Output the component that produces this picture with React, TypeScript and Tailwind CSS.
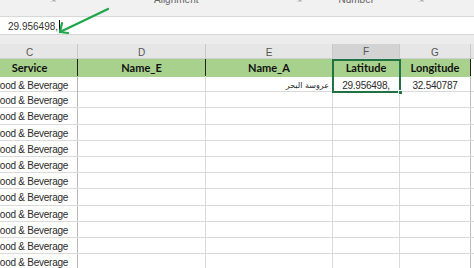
import React from "react";

const cols = "grid grid-cols-[96px_128px_127px_67px_71px_40px]";
const arial = { fontFamily: '"Liberation Sans", Arial, sans-serif' };
const calibri = { fontFamily: 'Lato, "Open Sans", sans-serif' };

export default function App() {
  const rows = Array.from({ length: 12 });
  return (
    <div className="relative w-[474px] h-[268px] overflow-hidden bg-white" style={arial}>
      {/* ribbon */}
      <div className="h-[17px] bg-[#f1f1f1] overflow-hidden relative">
        <div className="flex items-start text-[10px] text-[#666] -mt-[6px] h-[12px] leading-[12px]">
          <span className="ml-[50px] text-[7px] text-[#999]">⇲</span>
          <span className="ml-[98px]">Alignment</span>
          <span className="ml-[98px] text-[7px] text-[#999]">⇲</span>
          <span className="ml-[36px]">Number</span>
          <span className="ml-[44px] text-[7px] text-[#999]">⇲</span>
        </div>
        <div className="absolute left-0 right-0 bottom-0 h-px bg-[#d8d8d8]" />
      </div>
      {/* formula bar */}
      <div className="h-[18px] bg-white border-b border-[#d6d6d6] flex items-center pl-[8px] pt-[2px]">
        <span className="text-[10px] text-[#333]">29.956498,</span>
        <span className="w-px h-[13px] bg-black ml-[1px]" />
      </div>
      {/* band */}
      <div className="h-[9px] bg-[#ececec]" />
      {/* column headers */}
      <div className={`${cols} -ml-[18px] h-[15px] bg-[#e6e6e6] text-[10px] text-[#555] border-b border-[#cfcfcf]`}>
        {["C", "D", "E", "F", "G", ""].map((c, i) => (
          <div
            key={i}
            className={`flex items-center justify-center border-r border-[#c8c8c8] ${
              c === "F" ? "bg-[#d3d3d3] border-b-2 border-b-[#217346]" : ""
            }`}
          >
            {c}
          </div>
        ))}
      </div>
      {/* header row */}
      <div
        className={`${cols} -ml-[18px] h-[17px] text-[11px] font-bold text-[#111] border-b-[1.5px] border-[#222]`}
        style={calibri}
      >
        {["Service", "Name_E", "Name_A", "Latitude", "Longitude", ""].map((c, i) => (
          <div
            key={i}
            className={`flex items-center justify-center pt-[1px] border-r-[1.5px] border-[#222] ${
              i === 5 ? "bg-white border-r-0" : "bg-[#a9d18e]"
            }`}
          >
            {c}
          </div>
        ))}
      </div>
      {/* data rows */}
      {rows.map((_, r) => (
        <div
          key={r}
          className={`${cols} -ml-[18px] h-[16.2px] text-[10px] tracking-[-0.25px] text-[#2a2a2a] border-b border-[#dadada]`}
        >
          <div className="flex items-center border-r border-[#b9b9b9] pl-[12px] pt-[2px] overflow-hidden whitespace-nowrap">
            Food &amp; Beverage
          </div>
          <div className="border-r border-[#dadada]" />
          <div className="flex items-center justify-end pr-[3px] pt-[2px] border-r border-[#dadada]">
            {r === 0 && (
              <span
                className="text-[8px] tracking-normal"
                style={{ fontFamily: '"DejaVu Sans", sans-serif' }}
                dir="rtl"
              >
                عروسة البحر
              </span>
            )}
          </div>
          <div className="flex items-center justify-center pt-[2px] border-r border-[#dadada]">
            {r === 0 && "29.956498,"}
          </div>
          <div className="flex items-center justify-center pt-[2px] border-r border-[#bdbdbd]">
            {r === 0 && "32.540787"}
          </div>
          <div />
        </div>
      ))}
      {/* selection border */}
      <div className="absolute left-[332px] top-[59px] w-[69px] h-[34px] border-2 border-[#217346] pointer-events-none" />
      <div className="absolute left-[398px] top-[90px] w-[5px] h-[5px] bg-[#217346] border border-white" />
      {/* green arrow */}
      <svg className="absolute left-0 top-0" width="474" height="60" viewBox="0 0 474 60">
        <g stroke="#1ea64a" strokeWidth="2.2" fill="none" strokeLinecap="round" strokeLinejoin="round">
          <line x1="108" y1="9" x2="60" y2="32" />
          <polyline points="62,23 60,32 68,33" />
        </g>
      </svg>
    </div>
  );
}
